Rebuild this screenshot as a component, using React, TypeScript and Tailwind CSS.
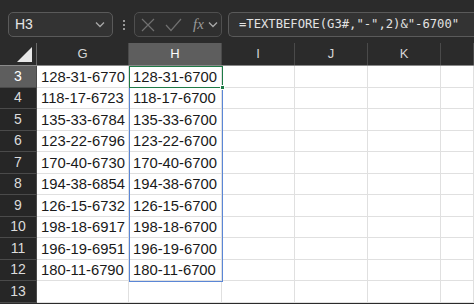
import React from 'react'

const rows = [
  { n: 3, g: '128-31-6770', h: '128-31-6700' },
  { n: 4, g: '118-17-6723', h: '118-17-6700' },
  { n: 5, g: '135-33-6784', h: '135-33-6700' },
  { n: 6, g: '123-22-6796', h: '123-22-6700' },
  { n: 7, g: '170-40-6730', h: '170-40-6700' },
  { n: 8, g: '194-38-6854', h: '194-38-6700' },
  { n: 9, g: '126-15-6732', h: '126-15-6700' },
  { n: 10, g: '198-18-6917', h: '198-18-6700' },
  { n: 11, g: '196-19-6951', h: '196-19-6700' },
  { n: 12, g: '180-11-6790', h: '180-11-6700' },
  { n: 13, g: '', h: '' },
]

const cols = ['G', 'H', 'I', 'J', 'K', '']
const widths = ['w-[92px]', 'w-[93px]', 'w-[73px]', 'w-[73px]', 'w-[73px]', 'flex-1']

function Chevron() {
  return (
    <svg width="10" height="7" viewBox="0 0 10 7" fill="none">
      <polyline points="1,1.5 5,5.5 9,1.5" stroke="#a8a8a8" strokeWidth="1.3" />
    </svg>
  )
}

export default function App() {
  return (
    <div className="w-[474px] h-[304px] overflow-hidden bg-[#2b2b2b] font-['Liberation_Sans',Arial,sans-serif]">
      {/* formula bar */}
      <div className="h-[43px] flex items-start pt-[12px] pl-[8px]">
        <div className="w-[105px] h-[25px] rounded-[5px] border border-[#5a5a5a] bg-[#333333] flex items-center justify-between pl-[6px] pr-[7px]">
          <span className="text-[14px] text-[#e6e6e6]">H3</span>
          <Chevron />
        </div>
        <div className="w-[21px] h-[25px] flex flex-col items-center justify-center gap-[2px]">
          <div className="w-[2px] h-[2px] bg-[#bdbdbd] rounded-full" />
          <div className="w-[2px] h-[2px] bg-[#bdbdbd] rounded-full" />
          <div className="w-[2px] h-[2px] bg-[#bdbdbd] rounded-full" />
        </div>
        <div className="w-[88px] h-[25px] rounded-[5px] border border-[#4f4f4f] bg-[#2f2f2f] flex items-center pl-[6px]">
          <svg width="14" height="14" viewBox="0 0 14 14">
            <path d="M1 1 L13 13 M13 1 L1 13" stroke="#707070" strokeWidth="1.2" />
          </svg>
          <svg className="ml-[10px]" width="17" height="14" viewBox="0 0 17 14">
            <polyline points="1,7 6,12.5 16,1" fill="none" stroke="#707070" strokeWidth="1.2" />
          </svg>
          <span className="ml-[11px] text-[15px] italic text-[#9a9a9a] font-['Liberation_Serif',serif] leading-none">fx</span>
          <span className="ml-[4px]"><Chevron /></span>
        </div>
        <div className="ml-[6px] flex-1 h-[25px] rounded-l-[5px] border border-r-0 border-[#5a5a5a] bg-[#333333] flex items-center pl-[10px]">
          <span className="text-[12.2px] text-[#e2e2e2] font-['DejaVu_Sans_Mono',monospace] whitespace-nowrap">
            =TEXTBEFORE(G3#,"-",2)&amp;"-6700"
          </span>
        </div>
      </div>

      {/* column headers */}
      <div className="h-[23px] flex border-b border-[#8a8a8a]">
        <div className="w-[37px] border-r border-[#6a6a6a] flex items-end justify-end pr-[4px] pb-[3px]">
          <svg width="15" height="15" viewBox="0 0 15 15">
            <polygon points="15,0 15,15 0,15" fill="#e8e8e8" />
          </svg>
        </div>
        {cols.map((c, i) => (
          <div
            key={i}
            className={`${widths[i]} border-r border-[#4a4a4a] flex items-center justify-center text-[13px] ${
              c === 'H' ? 'bg-[#5e5e5e] text-white' : 'text-[#d6d6d6]'
            }`}
          >
            {c}
          </div>
        ))}
      </div>

      {/* grid */}
      <div className="relative">
        {rows.map((r) => (
          <div key={r.n} className="h-[21.5px] flex">
            <div
              className={`w-[37px] shrink-0 border-r border-b border-[#4a4a4a] flex items-center justify-center text-[14px] ${
                r.n === 3 ? 'bg-[#5e5e5e] text-white' : 'bg-[#262626] text-[#dcdcdc]'
              }`}
            >
              {r.n}
            </div>
            {[r.g, r.h, '', '', '', ''].map((v, i) => (
              <div
                key={i}
                className={`${widths[i]} shrink-0 bg-white border-r border-b border-[#e0e0e0] flex items-center pl-[4px] pt-[1px] text-[14.8px] text-[#1a1a1a] whitespace-nowrap overflow-hidden`}
              >
                {v}
              </div>
            ))}
          </div>
        ))}

        {/* selected range H3:H12 */}
        <div className="absolute left-[129px] top-0 w-[94px] h-[216px] border border-[#5a86d6] pointer-events-none" />
        {/* active cell */}
        <div className="absolute left-[129px] top-0 w-[94px] h-[22px] border-[1.5px] border-[#1f7a47] pointer-events-none" />
        <div className="absolute left-[220px] top-[19px] w-[5px] h-[5px] bg-[#1f7a47] border border-white" />
      </div>
    </div>
  )
}
